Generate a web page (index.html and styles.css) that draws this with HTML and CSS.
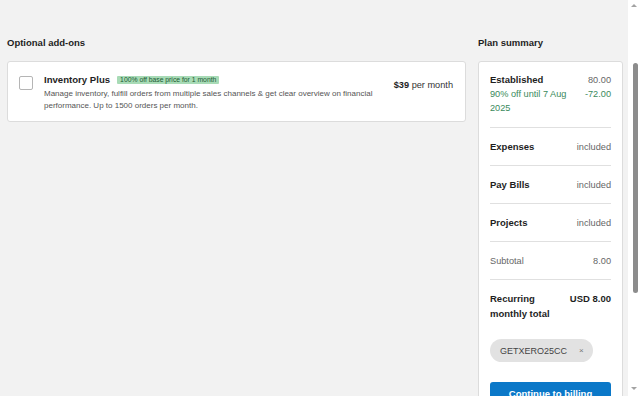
FILE: index.html
```html
<!DOCTYPE html>
<html>
<head>
<meta charset="utf-8">
<link rel="stylesheet" href="styles.css">
</head>
<body>
<div class="page">
  <div class="main">
    <section class="left">
      <h2 class="heading">Optional add-ons</h2>
      <div class="card addon">
        <span class="checkbox"></span>
        <div class="addon-text">
          <div class="addon-title">
            <span class="title">Inventory Plus</span>
            <span class="badge">100% off base price for 1 month</span>
          </div>
          <p class="desc">Manage inventory, fulfill orders from multiple sales channels &amp; get clear overview on financial performance. Up to 1500 orders per month.</p>
        </div>
        <div class="price"><b>$39</b> per month</div>
      </div>
    </section>
    <aside class="right">
      <h2 class="heading">Plan summary</h2>
      <div class="card summary">
        <div class="row first">
          <div class="label-col">
            <div class="label">Established</div>
            <div class="green">90% off until 7 Aug 2025</div>
          </div>
          <div class="value-col">
            <div class="value">80.00</div>
            <div class="green">-72.00</div>
          </div>
        </div>
        <div class="row"><span class="label">Expenses</span><span class="muted">included</span></div>
        <div class="row"><span class="label">Pay Bills</span><span class="muted">included</span></div>
        <div class="row"><span class="label">Projects</span><span class="muted">included</span></div>
        <div class="row"><span class="muted">Subtotal</span><span class="muted">8.00</span></div>
        <div class="row total"><span class="label total-label">Recurring monthly total</span><span class="label">USD 8.00</span></div>
        <div class="promo"><span class="pill">GETXERO25CC<span class="x">×</span></span></div>
        <button class="cta">Continue to billing</button>
      </div>
    </aside>
  </div>
  <div class="scrollbar">
    <span class="arrow up"></span>
    <span class="thumb"></span>
    <span class="arrow down"></span>
  </div>
</div>
</body>
</html>
```

FILE: styles.css
```css
* { box-sizing: border-box; }
html, body { margin: 0; padding: 0; }
body {
  font-family: "Liberation Sans", Arial, sans-serif;
  color: #1e1e1e;
  background: #f2f2f2;
}
.page {
  display: flex;
  height: 396px;
  overflow: hidden;
}
.main {
  flex: 1;
  display: flex;
  gap: 12px;
  padding: 37px 5px 0 7px;
  align-items: flex-start;
}
.left { width: 459px; }
.right { width: 145px; }
.heading {
  margin: 0 0 12px;
  font-size: 9.5px;
  line-height: 12px;
  font-weight: bold;
}
.card {
  background: #fff;
  border: 1px solid #dcdcdc;
  border-radius: 3px;
}
.addon {
  display: flex;
  align-items: flex-start;
  padding: 12px 12px 9px 11px;
}
.checkbox {
  flex: none;
  width: 14px;
  height: 14px;
  margin-top: 2px;
  border: 1px solid #b5b5b5;
  border-radius: 2px;
  background: #fff;
}
.addon-text {
  flex: 1;
  margin-left: 11px;
  margin-right: 14px;
}
.addon-title {
  display: flex;
  align-items: center;
  gap: 7px;
  height: 12px;
}
.title {
  font-size: 9.6px;
  font-weight: bold;
  line-height: 12px;
}
.badge {
  background: #a8dbb6;
  color: #1c5a33;
  font-size: 6.8px;
  line-height: 8px;
  padding: 0 3px;
  border-radius: 1px;
}
.desc {
  margin: 2px 0 0;
  font-size: 8px;
  line-height: 12px;
  color: #555;
}
.price {
  flex: none;
  margin-top: 5px;
  font-size: 9.2px;
  line-height: 12px;
  color: #333;
}
.price b { color: #1e1e1e; }
.summary {
  padding: 0 11px 40px;
}
.row {
  display: flex;
  justify-content: space-between;
  align-items: flex-start;
  padding: 12px 0 11px;
  border-bottom: 1px solid #e0e0e0;
  font-size: 9.2px;
  line-height: 14px;
}
.row.first { padding: 11px 0 12px; }
.label {
  font-weight: bold;
  font-size: 9.5px;
}
.label-col { width: 88px; }
.value-col { text-align: right; }
.green { color: #3a8a5c; }
.muted { color: #666; }
.value { color: #666; }
.total { border-bottom: none; padding-bottom: 0; line-height: 14.5px; }
.total-label { width: 70px; }
.promo {
  margin-top: 18px;
  display: flex;
}
.pill {
  display: inline-flex;
  align-items: center;
  height: 23px;
  padding: 0 9px 0 10px;
  border-radius: 12px;
  background: #e2e2e2;
  color: #444;
  font-size: 9px;
}
.x {
  margin-left: 12px;
  font-size: 8px;
  color: #777;
}
.cta {
  display: block;
  width: 100%;
  margin-top: 20px;
  height: 28px;
  border: none;
  border-radius: 3px;
  background: #0b78c8;
  color: #fff;
  font-family: "Liberation Sans", Arial, sans-serif;
  font-weight: bold;
  font-size: 9.5px;
  padding: 0 0 6px;
}
.scrollbar {
  width: 12px;
  flex: none;
  background: #fff;
  display: flex;
  flex-direction: column;
  align-items: center;
  padding: 4px 0 6px;
}
.arrow {
  width: 0;
  height: 0;
  border-left: 3px solid transparent;
  border-right: 3px solid transparent;
}
.arrow.up { border-bottom: 3px solid #a3a3a3; }
.arrow.down { border-top: 3px solid #a3a3a3; margin-top: auto; }
.thumb {
  width: 5px;
  height: 230px;
  margin-top: 56px;
  margin-left: 2px;
  border-radius: 3px;
  background: #8c8c8c;
}
```
